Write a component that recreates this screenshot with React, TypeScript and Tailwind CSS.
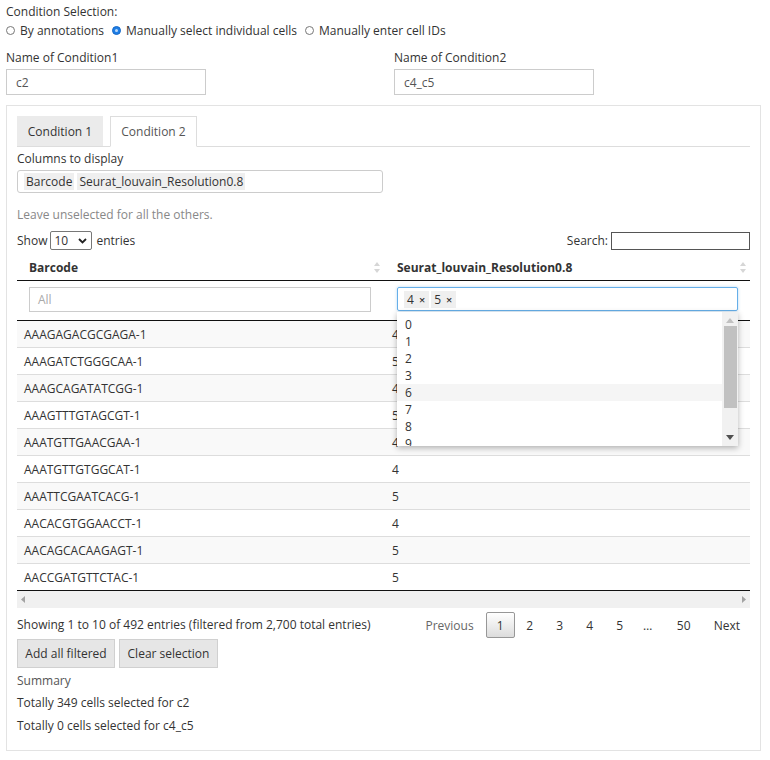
import React from "react";

const barcodes = [
  ["AAAGAGACGCGAGA-1", "4"],
  ["AAAGATCTGGGCAA-1", "5"],
  ["AAAGCAGATATCGG-1", "4"],
  ["AAAGTTTGTAGCGT-1", "5"],
  ["AAATGTTGAACGAA-1", "4"],
  ["AAATGTTGTGGCAT-1", "4"],
  ["AAATTCGAATCACG-1", "5"],
  ["AACACGTGGAACCT-1", "4"],
  ["AACAGCACAAGAGT-1", "5"],
  ["AACCGATGTTCTAC-1", "5"],
];

function SortIcon() {
  return (
    <svg width="6" height="11" viewBox="0 0 6 11" className="shrink-0">
      <path d="M3 0 L6 4 L0 4 Z" fill="#d6d6d6" />
      <path d="M3 11 L6 7 L0 7 Z" fill="#d6d6d6" />
    </svg>
  );
}

function Radio({ checked, label }: { checked?: boolean; label: string }) {
  return (
    <label className="flex items-center gap-[5px]">
      {checked ? (
        <span className="w-[9px] h-[9px] rounded-full bg-[#1e7ee6] border border-[#1769c7] flex items-center justify-center">
          <span className="w-[3px] h-[3px] rounded-full bg-white opacity-70" />
        </span>
      ) : (
        <span className="w-[9px] h-[9px] rounded-full border border-[#777] bg-white" />
      )}
      <span>{label}</span>
    </label>
  );
}

export default function App() {
  const options = ["0", "1", "2", "3", "6", "7", "8", "9"];
  return (
    <div className="w-[770px] h-[760px] bg-white text-[#333] font-['Open_Sans',sans-serif] text-[12px] leading-[17px] px-[6px] pt-[3px]">
      <div>Condition Selection:</div>
      <div className="flex items-center gap-[8px] mt-[2px]">
        <Radio label="By annotations" />
        <Radio checked label="Manually select individual cells" />
        <Radio label="Manually enter cell IDs" />
      </div>
      <div className="grid grid-cols-[388px_1fr] mt-[10px]">
        <div>
          <div>Name of Condition1</div>
          <div className="mt-[3px] w-[200px] h-[26px] border border-[#ccc] px-[9px] flex items-center text-[#555]">c2</div>
        </div>
        <div>
          <div>Name of Condition2</div>
          <div className="mt-[3px] w-[200px] h-[26px] border border-[#ccc] px-[9px] flex items-center text-[#555]">c4_c5</div>
        </div>
      </div>

      <div className="mt-[10px] w-[755px] h-[646px] border border-[#e3e3e3] px-[10px] pt-[10px] relative">
        <div className="flex items-end border-b border-[#ddd] h-[31px]">
          <div className="h-[30px] w-[86px] bg-[#ebebeb] flex items-center justify-center">Condition 1</div>
          <div className="h-[31px] w-[87px] ml-[7px] border border-[#ddd] border-b-white bg-white -mb-[1px] flex items-center justify-center text-[#555]">Condition 2</div>
        </div>
        <div className="mt-[3px]">Columns to display</div>
        <div className="mt-[3px] w-[366px] h-[23px] border border-[#ccc] rounded-[3px] flex items-center gap-[3px] px-[6px]">
          <span className="bg-[#efefef] px-[2px] leading-[17px]">Barcode</span>
          <span className="bg-[#efefef] px-[2px] leading-[17px]">Seurat_louvain_Resolution0.8</span>
        </div>
        <div className="mt-[13px] text-[#888]">Leave unselected for all the others.</div>

        <div className="mt-[8px] flex items-center justify-between">
          <div className="flex items-center">
            <span>Show</span>
            <span className="ml-[3px] w-[42px] h-[19px] border border-[#777] rounded-[2px] flex items-center justify-between pl-[3px] pr-[4px]">
              <span>10</span>
              <svg width="9" height="6" viewBox="0 0 9 6">
                <path d="M1 1 L4.5 4.5 L8 1" stroke="#222" strokeWidth="1.8" fill="none" />
              </svg>
            </span>
            <span className="ml-[4px]">entries</span>
          </div>
          <div className="flex items-center">
            <span>Search:</span>
            <span className="ml-[3px] w-[139px] h-[18px] border border-[#555]" />
          </div>
        </div>

        {/* table */}
        <div className="mt-[4px] w-[733px]">
          <div className="grid grid-cols-[367px_366px] h-[27px] border-b border-[#111] font-bold">
            <div className="flex items-center justify-between pl-[12px] pr-[4px]">
              <span>Barcode</span>
              <SortIcon />
            </div>
            <div className="flex items-center justify-between pl-[13px] pr-[4px]">
              <span>Seurat_louvain_Resolution0.8</span>
              <SortIcon />
            </div>
          </div>
          <div className="grid grid-cols-[367px_366px] h-[40px] border-b border-[#111]">
            <div className="pl-[12px] pt-[6px]">
              <div className="w-[342px] h-[25px] border border-[#ccc] px-[8px] flex items-center text-[#aaa]">All</div>
            </div>
            <div className="pl-[13px] pt-[6px] relative">
              <div className="w-[341px] h-[24px] border border-[#66afe9] rounded-[2px] px-[6px] flex items-center gap-[2px] shadow-[0_0_3px_rgba(102,175,233,0.5)]">
                <span className="bg-[#efefef] pl-[3px] pr-[4px] h-[17px] flex items-center gap-[5px]">4 <span className="text-[11px] font-semibold">×</span></span>
                <span className="bg-[#efefef] pl-[3px] pr-[4px] h-[17px] flex items-center gap-[5px]">5 <span className="text-[11px] font-semibold">×</span></span>
              </div>
            </div>
          </div>
          {barcodes.map(([b, v], i) => (
            <div
              key={b}
              className={`grid grid-cols-[367px_366px] h-[27px] items-center ${i % 2 === 0 ? "bg-[#f9f9f9]" : "bg-white"} ${i < 9 ? "border-b border-[#ddd]" : "border-b border-[#111]"}`}
            >
              <div className="pl-[7px]">{b}</div>
              <div className="pl-[8px]">{v}</div>
            </div>
          ))}
          <div className="h-[17px] bg-[#f0f0f0] flex items-center justify-between px-[4px]">
            <svg width="4" height="7" viewBox="0 0 4 7"><path d="M4 0 L0 3.5 L4 7 Z" fill="#a3a3a3" /></svg>
            <svg width="4" height="7" viewBox="0 0 4 7"><path d="M0 0 L4 3.5 L0 7 Z" fill="#a3a3a3" /></svg>
          </div>
        </div>

        <div className="flex items-center justify-between mt-[3px] h-[28px]">
          <div className="-mt-[2px]">Showing 1 to 10 of 492 entries (filtered from 2,700 total entries)</div>
          <div className="flex items-center text-[#333]">
            <span className="pr-[12px] text-[#666]">Previous</span>
            <span className="w-[29px] h-[26px] border border-[#979797] rounded-[2px] bg-gradient-to-b from-white to-[#dcdcdc] flex items-center justify-center">1</span>
            <span className="w-[30px] text-center">2</span>
            <span className="w-[30px] text-center">3</span>
            <span className="w-[30px] text-center">4</span>
            <span className="w-[30px] text-center">5</span>
            <span className="w-[26px] text-center">…</span>
            <span className="w-[46px] text-center">50</span>
            <span className="pl-[7px] pr-[10px]">Next</span>
          </div>
        </div>
        <div className="flex gap-[4px]">
          <button className="h-[29px] w-[98px] bg-[#e6e6e6] border border-[#d0d0d0] text-[#333]">Add all filtered</button>
          <button className="h-[29px] w-[99px] bg-[#e6e6e6] border border-[#d0d0d0] text-[#333]">Clear selection</button>
        </div>
        <div className="mt-[4px] text-[#555]">Summary</div>
        <div className="mt-[5px]">Totally 349 cells selected for c2</div>
        <div className="mt-[6px]">Totally 0 cells selected for c4_c5</div>

        {/* dropdown overlay */}
        <div className="absolute left-[390px] top-[206px] w-[341px] h-[134px] bg-white shadow-[0_2px_6px_rgba(0,0,0,0.3)] overflow-hidden">
          <div className="flex h-full">
            <div className="flex-1 pt-[4px]">
              {options.map((o) => (
                <div key={o} className={`h-[17px] pl-[8px] leading-[17px] ${o === "6" ? "bg-[#f5f5f5]" : ""}`}>{o}</div>
              ))}
            </div>
            <div className="w-[16px] h-full bg-[#f1f1f1] flex flex-col items-center">
              <svg width="8" height="5" viewBox="0 0 8 5" className="mt-[6px]"><path d="M4 0 L8 5 L0 5 Z" fill="#c1c1c1" /></svg>
              <div className="mt-[3px] w-[13px] h-[82px] bg-[#c1c1c1]" />
              <div className="flex-1" />
              <svg width="8" height="5" viewBox="0 0 8 5" className="mb-[6px]"><path d="M0 0 L8 0 L4 5 Z" fill="#505050" /></svg>
            </div>
          </div>
        </div>
      </div>
    </div>
  );
}
